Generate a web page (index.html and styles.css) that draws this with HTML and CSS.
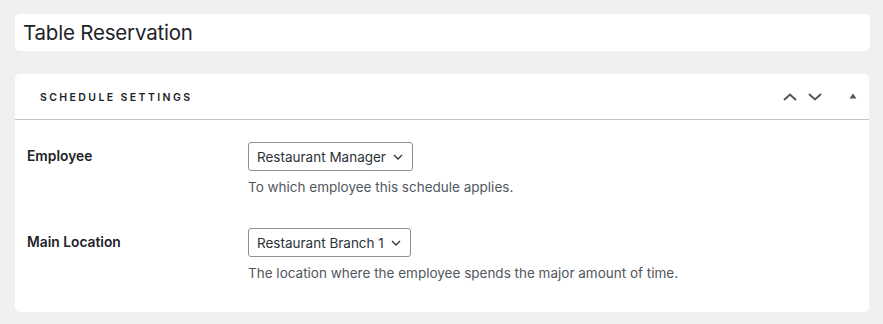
FILE: index.html
```html
<!DOCTYPE html>
<html lang="en">
<head>
<meta charset="utf-8">
<title>Table Reservation</title>
<link rel="stylesheet" href="styles.css">
</head>
<body>
<div class="page">
  <div class="title-box">Table Reservation</div>
  <div class="panel">
    <div class="panel-header">
      <h2 class="panel-title">Schedule Settings</h2>
      <div class="panel-actions">
        <svg class="icon-chev" width="16" height="10" viewBox="0 0 16 10"><path d="M2 8 L8 2.5 L14 8" fill="none" stroke="#50575e" stroke-width="2"/></svg>
        <svg class="icon-chev" width="16" height="10" viewBox="0 0 16 10"><path d="M2 2 L8 7.5 L14 2" fill="none" stroke="#50575e" stroke-width="2"/></svg>
        <svg class="icon-tri" width="8" height="6" viewBox="0 0 8 6"><path d="M0.5 5.5 L4 0.5 L7.5 5.5 Z" fill="#50575e"/></svg>
      </div>
    </div>
    <div class="panel-body">
      <div class="row">
        <div class="label">Employee</div>
        <div class="field">
          <div class="select">Restaurant Manager
            <svg class="sel-chev" width="10" height="6" viewBox="0 0 10 6"><path d="M1 1 L5 5 L9 1" fill="none" stroke="#2c3338" stroke-width="1.3"/></svg>
          </div>
          <p class="desc">To which employee this schedule applies.</p>
        </div>
      </div>
      <div class="row">
        <div class="label">Main Location</div>
        <div class="field">
          <div class="select">Restaurant Branch 1
            <svg class="sel-chev" width="10" height="6" viewBox="0 0 10 6"><path d="M1 1 L5 5 L9 1" fill="none" stroke="#2c3338" stroke-width="1.3"/></svg>
          </div>
          <p class="desc">The location where the employee spends the major amount of time.</p>
        </div>
      </div>
    </div>
  </div>
</div>
</body>
</html>
```
FILE: styles.css
```css
html, body {
  margin: 0;
  padding: 0;
  background: #f0f0f1;
}
body {
  font-family: Inter, "Noto Sans", sans-serif;
  color: #1d2327;
}
.page {
  padding: 14px 14px 0 15px;
}
.title-box {
  width: 855px;
  height: 37px;
  box-sizing: border-box;
  background: #fff;
  border-radius: 5px;
  padding: 0 8px;
  font-size: 20.5px;
  line-height: 37px;
  letter-spacing: -0.2px;
  color: #1d2327;
}
.panel {
  margin-top: 23px;
  width: 854px;
  background: #fff;
  border-radius: 5px;
}
.panel-header {
  height: 46px;
  box-sizing: border-box;
  border-bottom: 1px solid #c3c4c7;
  display: flex;
  align-items: center;
  padding: 0 12px 0 25px;
}
.panel-title {
  margin: 0;
  flex: 1;
  font-size: 10.5px;
  font-weight: 600;
  letter-spacing: 2.4px;
  text-transform: uppercase;
  color: #1d2327;
  padding-top: 2px;
}
.panel-actions {
  display: flex;
  align-items: center;
  gap: 9px;
  padding-top: 1px;
}
.icon-tri {
  margin-left: 17px;
  margin-top: -2px;
}
.panel-body {
  padding: 22px 0 30px 12px;
}
.row {
  display: flex;
}
.row + .row {
  margin-top: 32px;
}
.label {
  width: 221px;
  font-size: 13.8px;
  font-weight: 600;
  line-height: 29px;
  color: #1d2327;
}
.field {
  display: flex;
  flex-direction: column;
  align-items: flex-start;
}
.select {
  height: 29px;
  box-sizing: border-box;
  border: 1px solid #8c8f94;
  border-radius: 3px;
  padding: 0 9px 0 8px;
  display: flex;
  align-items: center;
  gap: 7px;
  font-size: 13.5px;
  color: #2c3338;
}
.desc {
  margin: 7px 0 0;
  font-size: 13.5px;
  line-height: 18px;
  color: #50575e;
}
```
